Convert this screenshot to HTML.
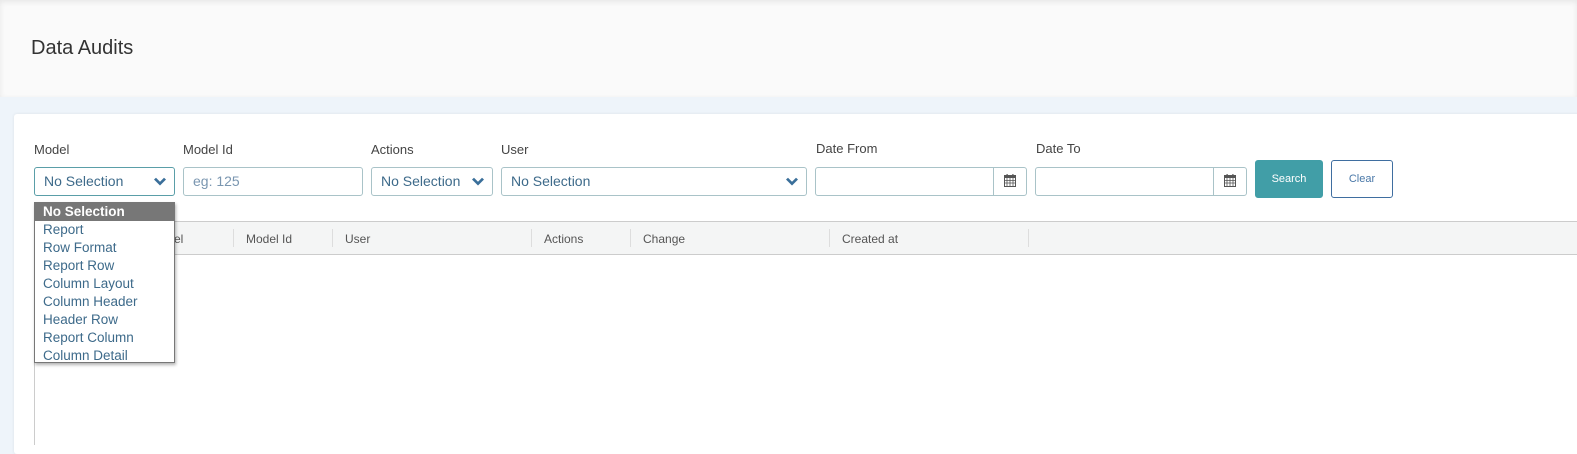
<!DOCTYPE html>
<html><head><style>
body{margin:0;width:1577px;height:445px;overflow:hidden;background:#eef4fa;font-family:"Liberation Sans",sans-serif;position:relative}
.hdr{position:absolute;left:0;top:0;width:1577px;height:97px;background:#fafafa;box-shadow:0 2px 6px rgba(0,0,0,.08) inset}
.hdr h1{position:absolute;left:31px;top:37px;margin:0;font-weight:normal;font-size:20px;color:#333}
.card{position:absolute;left:14px;top:114px;width:1570px;height:340px;background:#fff;border-radius:3px;box-shadow:0 0 3px rgba(0,0,0,.08)}
.lbl{position:absolute;font-size:13px;color:#444}
.in{position:absolute;height:29px;border:1px solid #a9c3c8;border-radius:3px;box-sizing:border-box;font-size:14px;color:#3d6a8a;line-height:27px;padding-left:9px;background:#fff}
.chev{position:absolute;right:7px;top:9px}
.cal{position:absolute;right:0;top:0;width:32px;height:27px;border-left:1px solid #a9c3c8}
.btn{position:absolute;top:160px;height:38px;border-radius:3px;box-sizing:border-box;font-size:11px;text-align:center;line-height:36px}
.th{position:absolute;left:34px;top:221px;width:1560px;height:34px;background:#f4f5f5;border-top:1px solid #ccc;border-bottom:1px solid #ccc;box-sizing:border-box}
.th span{position:absolute;top:10px;font-size:12px;color:#555}
.th i{position:absolute;top:7px;width:1px;height:18px;background:#ddd}
.dd{position:absolute;left:34px;top:202px;width:141px;height:161px;border:1px solid #777;background:#fff;box-sizing:border-box;box-shadow:1px 2px 3px rgba(0,0,0,.3);font-size:13.5px;color:#3d6a8a}
.dd div{height:18px;line-height:18px;padding-left:8px}
</style></head><body>
<div class="hdr"><h1>Data Audits</h1></div>
<div class="card"></div>
<div class="lbl" style="left:34px;top:142px">Model</div>
<div class="lbl" style="left:183px;top:142px">Model Id</div>
<div class="lbl" style="left:371px;top:142px">Actions</div>
<div class="lbl" style="left:501px;top:142px">User</div>
<div class="lbl" style="left:816px;top:141px">Date From</div>
<div class="lbl" style="left:1036px;top:141px">Date To</div>
<svg width="0" height="0" style="position:absolute"><defs><symbol id="cv" viewBox="0 0 14 10"><path d="M1 2.5L3 .8L7 4.8L11 .8L13 2.5L7 8.5Z" fill="#3a6f9a"/></symbol><symbol id="cl" viewBox="0 0 12 13"><rect x=".5" y="1.5" width="11" height="11" fill="none" stroke="#555"/><rect x=".5" y="1.5" width="11" height="2.5" fill="#555"/><path d="M0.5 6.5H11.5M0.5 9H11.5M3 4V12.5M6 4V12.5M9 4V12.5" stroke="#555" stroke-width=".8"/><rect x="2.5" y="0" width="1.2" height="3" fill="#555"/><rect x="8.3" y="0" width="1.2" height="3" fill="#555"/></symbol></defs></svg>
<div class="in" style="left:34px;top:167px;width:141px;border-color:#5a9ea8">No Selection<svg class="chev" width="14" height="10"><use href="#cv"/></svg></div>
<div class="in" style="left:183px;top:167px;width:180px;color:#7a96b0">eg: 125</div>
<div class="in" style="left:371px;top:167px;width:122px">No Selection<svg class="chev" width="14" height="10"><use href="#cv"/></svg></div>
<div class="in" style="left:501px;top:167px;width:306px">No Selection<svg class="chev" width="14" height="10"><use href="#cv"/></svg></div>
<div class="in" style="left:815px;top:167px;width:212px"><div class="cal"><svg width="12" height="13" style="position:absolute;left:10px;top:6px"><use href="#cl"/></svg></div></div>
<div class="in" style="left:1035px;top:167px;width:212px"><div class="cal"><svg width="12" height="13" style="position:absolute;left:10px;top:6px"><use href="#cl"/></svg></div></div>
<div class="btn" style="left:1255px;width:68px;background:#419ea7;color:#fff;border:1px solid #419ea7">Search</div>
<div class="btn" style="left:1331px;width:62px;background:#fff;color:#4a78a8;border:1px solid #3f6ea0">Clear</div>
<div class="th">
<span style="left:140px">el</span><i style="left:199px"></i><span style="left:212px">Model Id</span><i style="left:298px"></i><span style="left:311px">User</span><i style="left:497px"></i><span style="left:510px">Actions</span><i style="left:596px"></i><span style="left:609px">Change</span><i style="left:795px"></i><span style="left:808px">Created at</span><i style="left:994px"></i>
</div>
<div style="position:absolute;left:34px;top:255px;width:1px;height:190px;background:#ccc"></div>
<div class="dd">
<div style="background:#777;color:#fff;font-weight:bold">No Selection</div>
<div>Report</div><div>Row Format</div><div>Report Row</div><div>Column Layout</div><div>Column Header</div><div>Header Row</div><div>Report Column</div><div>Column Detail</div>
</div>
</body></html>
